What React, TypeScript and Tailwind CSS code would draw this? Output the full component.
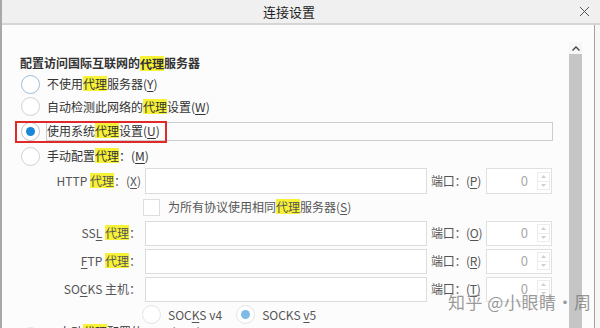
import React from "react";

const HL = ({ children }: { children: React.ReactNode }) => (
  <span className="inline-block bg-[#f8f236] leading-[15px]">{children}</span>
);
const U = ({ children }: { children: React.ReactNode }) => (
  <span className="underline underline-offset-2 decoration-1">{children}</span>
);

type RV = "hover" | "off" | "on" | "onLight" | "offLight";
function Radio({ v }: { v: RV }) {
  const border =
    v === "hover"
      ? "border-[#9dbdd9]"
      : v === "on"
      ? "border-[#c4c4c4]"
      : v === "off"
      ? "border-[#d2d2d2]"
      : "border-[#e4e4e4]";
  return (
    <span
      className={
        "w-[19px] h-[19px] rounded-full border bg-white flex items-center justify-center shrink-0 " +
        border
      }
    >
      {v === "on" && <span className="w-[9px] h-[9px] rounded-full bg-[#1b86d8]" />}
      {v === "onLight" && <span className="w-[9px] h-[9px] rounded-full bg-[#7dbbe6]" />}
    </span>
  );
}

function Spinner() {
  return (
    <span className="flex flex-col w-[13px] h-[18px] border border-[#ececec] bg-white">
      <span className="flex-1 flex items-center justify-center border-b border-[#ececec]">
        <svg width="5" height="3" viewBox="0 0 5 3">
          <path d="M0 3 L2.5 0 L5 3 Z" fill="#cfcfcf" />
        </svg>
      </span>
      <span className="flex-1 flex items-center justify-center">
        <svg width="5" height="3" viewBox="0 0 5 3">
          <path d="M0 0 L2.5 3 L5 0 Z" fill="#cfcfcf" />
        </svg>
      </span>
    </span>
  );
}

function ProxyRow({
  label,
  portKey,
  h,
}: {
  label: React.ReactNode;
  portKey: string;
  h: "a" | "b";
}) {
  return (
    <div className="h-[28px] shrink-0 flex items-center gap-[4px]">
      <div className="w-[121px] text-right whitespace-nowrap text-[#555]">{label}</div>
      <div
        className={
          "w-[282px] bg-white border border-[#dcdcdc] " + (h === "a" ? "h-[26px]" : "h-[25px]")
        }
      />
      <div className="w-[51px] whitespace-nowrap text-[#555] tracking-[-0.3px]">
        端口：(<U>{portKey}</U>)
      </div>
      <div
        className={
          "w-[66px] bg-white border border-[#e0e0e0] flex items-center justify-end pr-[1px] " +
          (h === "a" ? "h-[26px]" : "h-[25px]")
        }
      >
        <span className="text-[13px] text-[#a8a8a8] mr-[9px]">0</span>
        <Spinner />
      </div>
    </div>
  );
}

export default function App() {
  return (
    <div
      className="w-[600px] h-[328px] overflow-hidden relative bg-[#fcfcfc] border-l-2 border-[#a8a8a8] text-[12px] text-[#333]"
      style={{ fontFamily: '"Noto Sans CJK SC", "Noto Sans", sans-serif' }}
    >
      {/* title bar */}
      <div className="h-[25px] bg-[#f0f0f0] border-b-2 border-[#d6d6d6] flex items-center">
        <div className="pl-[261px] flex-1 text-[13px] text-[#222] leading-none">连接设置</div>
        <div className="w-[20px] mr-[6px] flex items-center justify-center">
          <svg width="11" height="11" viewBox="0 0 11 11">
            <path d="M1 1 L10 10 M10 1 L1 10" stroke="#555" strokeWidth="1" />
          </svg>
        </div>
      </div>

      {/* body */}
      <div className="flex h-[303px]">
        <div className="w-[567px] flex flex-col pl-[18px] pt-[29px] overflow-hidden">
          <div className="h-[18px] shrink-0 flex items-center font-bold text-[#333]">
            配置访问国际互联网的<HL>代理</HL>服务器
          </div>
          <div className="h-[24px] shrink-0 flex items-center gap-[7px] pl-[1px]">
            <Radio v="hover" />
            <span>
              不使用<HL>代理</HL>服务器(<U>Y</U>)
            </span>
          </div>
          <div className="h-[21px] shrink-0 flex items-center gap-[7px] pl-[1px]">
            <Radio v="off" />
            <span>
              自动检测此网络的<HL>代理</HL>设置(<U>W</U>)
            </span>
          </div>
          <div className="h-[28px] shrink-0 flex items-center gap-[6px] pl-[1px]">
            <Radio v="on" />
            <span className="w-[507px] h-[19px] border border-[#cdcdcd] flex items-center">
              <span>
                使用系统<HL>代理</HL>设置(<U>U</U>)
              </span>
            </span>
          </div>
          <div className="h-[22px] shrink-0 flex items-center gap-[7px] pl-[1px]">
            <Radio v="off" />
            <span>
              手动配置<HL>代理</HL>：(<U>M</U>)
            </span>
          </div>
          <ProxyRow
            h="a"
            portKey="P"
            label={
              <>
                HTTP <HL>代理</HL>：(<U>X</U>)
              </>
            }
          />
          <div className="h-[24px] shrink-0 flex items-center gap-[8px] pl-[123px]">
            <span className="w-[17px] h-[17px] border border-[#dedede] bg-white shrink-0" />
            <span className="text-[#555]">
              为所有协议使用相同<HL>代理</HL>服务器(<U>S</U>)
            </span>
          </div>
          <ProxyRow
            h="b"
            portKey="O"
            label={
              <>
                SS<U>L</U> <HL>代理</HL>：
              </>
            }
          />
          <ProxyRow
            h="b"
            portKey="R"
            label={
              <>
                <U>F</U>TP <HL>代理</HL>：
              </>
            }
          />
          <ProxyRow
            h="b"
            portKey="T"
            label={
              <>
                SO<U>C</U>KS 主机：
              </>
            }
          />
          <div className="h-[23px] shrink-0 flex items-center pl-[122px] text-[#555]">
            <Radio v="offLight" />
            <span className="ml-[7px]">
              SOC<U>K</U>S v4
            </span>
            <span className="ml-[14px]">
              <Radio v="onLight" />
            </span>
            <span className="ml-[7px]">
              SOCKS <U>v</U>5
            </span>
          </div>
          <div className="h-[22px] shrink-0 -mt-[2px] flex items-start gap-[7px] pl-[1px] leading-[15px]">
            <span className="mt-[3px]">
              <Radio v="offLight" />
            </span>
            <span className="pl-[12px]">
              自动<HL>代理</HL>配置的 URL (PAC)
            </span>
          </div>
        </div>

        {/* scrollbar */}
        <div className="w-[13px] flex flex-col pt-[17px]">
          <div className="h-[12px] bg-[#f6f6f6] flex items-center justify-center">
            <svg width="8" height="5" viewBox="0 0 8 5">
              <path d="M0.5 4.5 L4 1 L7.5 4.5" stroke="#444" strokeWidth="1.3" fill="none" />
            </svg>
          </div>
          <div className="flex-1 bg-[#c5c5c5]" />
        </div>
        <div className="w-[12px]" />
        <div className="w-[1px] bg-[#a3a3a3]" />
        <div className="flex-1 bg-[#f7f7f7]" />
      </div>

      {/* red annotation box */}
      <div className="absolute left-[13px] top-[121px] w-[152px] h-[22px] border-2 border-[#e02a2a]" />

      {/* watermark */}
      <div className="absolute left-[446px] top-[289px] text-[17px] text-[#6d6d6d]/70 whitespace-nowrap tracking-[0.5px]">
        知乎 @小眼睛·周
      </div>
    </div>
  );
}
